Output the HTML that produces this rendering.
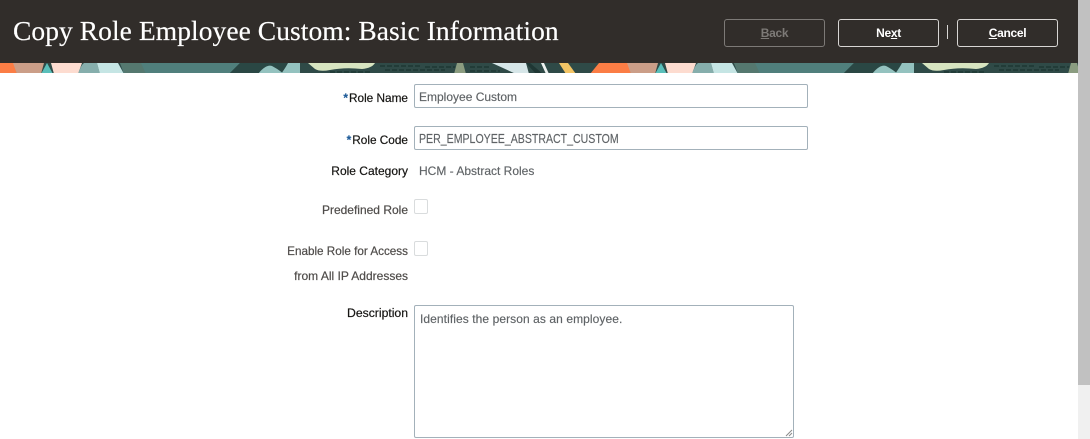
<!DOCTYPE html>
<html><head><meta charset="utf-8">
<style>
html,body{margin:0;padding:0;background:#fff;overflow:hidden}
body{width:1090px;height:439px;position:relative;font-family:"Liberation Sans",sans-serif;font-size:12px}
.abs{position:absolute}
#hdr{left:0;top:0;width:1078px;height:63px;background:#312d2a}
#title{left:13px;top:14px;font-family:"Liberation Serif",serif;font-size:27.5px;line-height:34px;color:#fff;white-space:nowrap;letter-spacing:.06px;-webkit-text-stroke:.15px #fff}
.btn{position:absolute;top:19px;width:99px;height:26px;border:1px solid #d8d6d4;border-radius:3px;color:#fff;font-weight:bold;font-size:12px;letter-spacing:-.3px;line-height:27px;text-align:center}
.btn.dis{border-color:#7d7a77;color:#7d7a77}
#sb{left:1078px;top:0;width:12px;height:439px;background:#f0f0f0}
#th{left:1078px;top:0;width:12px;height:385px;background:#c1c1c1}
.lb{position:absolute;right:682px;text-align:right;white-space:nowrap;color:#161513;line-height:16px;-webkit-text-stroke:.2px}
.lb.g{color:#4f4c4a}
.star{color:#1f5c99;font-weight:bold;margin-right:1px}
.inp{position:absolute;left:414px;height:22px;border:1px solid #a3b1ba;border-radius:2px;color:#5f6366;padding-left:4px;line-height:25px;background:#fff;width:388px;-webkit-text-stroke:.15px}
.cb{position:absolute;left:414px;width:12px;height:13px;border:1px solid #d9dcdd;border-radius:2px;background:#fff}
#ta{left:414px;top:305px;width:378px;height:131px;border:1px solid #a3b1ba;border-radius:2px;background:#fff}
#tt{left:420px;top:311px;color:#5f6366;line-height:16px;white-space:nowrap;letter-spacing:.08px;-webkit-text-stroke:.15px}
</style></head>
<body>
<div class="abs" id="hdr"></div>
<div class="abs" id="title">Copy Role Employee Custom: Basic Information</div>
<div class="btn dis" style="left:724px"><u>B</u>ack</div>
<div class="btn" style="left:838px">Ne<u>x</u>t</div>
<div class="abs" style="left:947px;top:25px;width:1px;height:14px;background:#d8d6d4"></div>
<div class="btn" style="left:957px"><u>C</u>ancel</div>

<svg class="abs" style="left:0;top:63px" width="1078" height="10" viewBox="0 0 1078 10">
<defs><g id="p">
<rect x="0" y="0" width="614" height="11" fill="#2f4a47"/>
<polygon points="-15,0 14,0 17,11 -24,11" fill="#fb7d45"/>
<polygon points="13,0 44,0 41,11 17,11" fill="#cb9e88"/>
<polygon points="47,0 53,11 41,11" fill="#5abfba"/>
<polygon points="51,0 82,0 78,11 54,11" fill="#fddcd0"/>
<path d="M78 11 Q81 2 84 0 H97 L100 11Z" fill="#86aeac"/>
<path d="M97 0 H118 L124 11 H100Z" fill="#c5e5e4"/>
<polygon points="120,0 240,0 229,11 124,11" fill="#507f7c"/>
<polygon points="120,0 141,0 146,11 125,11" fill="#55786f"/>
<polygon points="240,0 300,0 300,11 229,11" fill="#2a4744"/>
<path d="M258 11 Q266 1 272 3 Q278 6 284 11Z" fill="#94c2bf"/>
<path d="M281 11 Q286 4 288 0 H300 V11Z" fill="#94c2bf"/>
<path d="M308 0 H375 Q372 5 362 6 Q345 4 330 7 Q320 9 315 6Z" fill="#d7e4c0"/>
<path d="M380 3h40M385 7h60M330 9h40M425 4h30M470 4h20M470 8h30" stroke="#1f3734" stroke-width="1.5" stroke-dasharray="5 2"/>
<polygon points="457,0 463,0 466,11 454,11" fill="#8b9c80"/>
<polygon points="492,0 526,0 529,11 516,11" fill="#d6e6e8"/>
<polygon points="526,0 530,0 543,11 536,11" fill="#1f3734"/>
<polygon points="541,0 544,0 549,11 546,11" fill="#eef2f0"/>
<polygon points="559,0 568,0 576,11 566,11" fill="#f3c465"/>
</g></defs>
<use href="#p" x="0"/><use href="#p" x="614"/>
</svg>

<div class="abs" id="sb"></div><div class="abs" id="th"></div>

<div class="lb" style="top:90px;font-size:11.8px"><span class="star">*</span>Role Name</div>
<div class="inp" style="top:84px">Employee Custom</div>
<div class="lb" style="top:132px;font-size:11.8px"><span class="star">*</span>Role Code</div>
<div class="inp" style="top:126px"><span style="display:inline-block;font-size:12.6px;transform:scaleX(.84);transform-origin:0 50%;white-space:nowrap">PER_EMPLOYEE_ABSTRACT_CUSTOM</span></div>
<div class="lb" style="top:163px">Role Category</div>
<div class="abs" style="left:419px;top:163px;color:#5f6366;line-height:16px;-webkit-text-stroke:.15px">HCM - Abstract Roles</div>
<div class="lb g" style="top:202px">Predefined Role</div>
<div class="cb" style="top:199px"></div>
<div class="lb g" style="top:244px;font-size:11.7px">Enable Role for Access</div>
<div class="cb" style="top:241px"></div>
<div class="lb g" style="top:268px">from All IP Addresses</div>
<div class="lb" style="top:305px;font-size:12.2px">Description</div>
<div class="abs" id="ta"></div>
<div class="abs" id="tt">Identifies the person as an employee.</div>
<svg class="abs" style="left:785px;top:429px" width="9" height="9"><path d="M1 7 L7 1 M4 7 L7 4" stroke="#8a8a8a" stroke-width="1"/></svg>
</body></html>
